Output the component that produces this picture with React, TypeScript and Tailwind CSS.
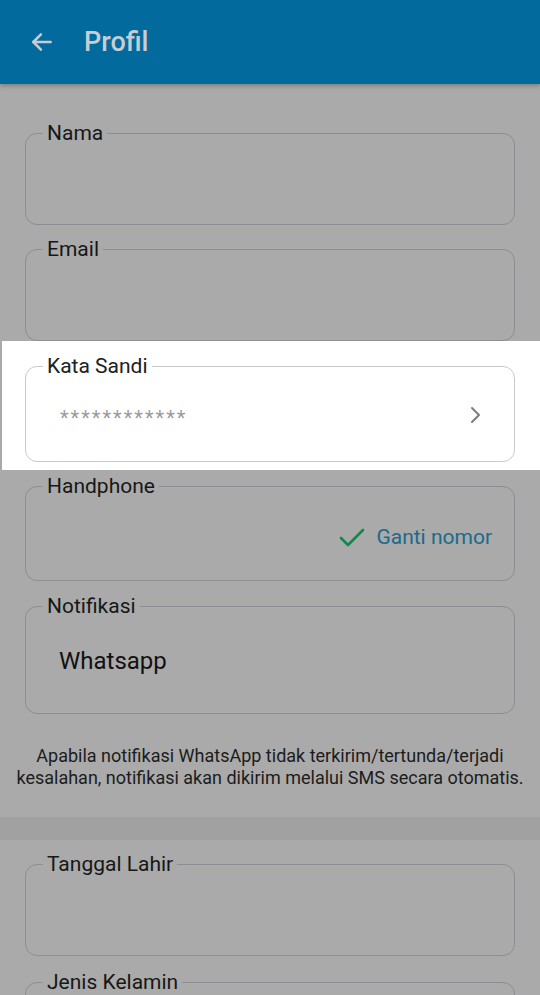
import React from 'react';

const FONT = { fontFamily: 'Roboto, "Noto Sans", Arial, sans-serif' };

function Field({
  label,
  height,
  light,
  children,
}: {
  label: string;
  height: string;
  light?: boolean;
  children?: React.ReactNode;
}) {
  return (
    <fieldset
      className={`rounded-[12px] border-[1.5px] ${light ? 'border-[#c9c9cd]' : 'border-[#8d8d92]'}`}
    >
      <legend className={`ml-[17px] px-[4px] text-[21px] leading-[24px] ${light ? 'text-[#202020]' : 'text-[#171717]'}`}>
        {label}
      </legend>
      <div className={`${height} flex items-center pl-[34px] pr-[22px] pb-[10px]`}>{children}</div>
    </fieldset>
  );
}

export default function App() {
  return (
    <div className="h-[995px] w-[540px] overflow-hidden bg-[#aaaaaa]" style={FONT}>
      <header className="relative z-10 flex h-[84px] items-center bg-[#036a9d] shadow-[0_2px_4px_rgba(0,0,0,0.25)]">
        <svg className="ml-[29px]" width="26" height="26" viewBox="0 0 24 24" fill="none" stroke="#c7cdd1" strokeWidth="2.3" strokeLinecap="round" strokeLinejoin="round">
          <path d="M20 12H4" />
          <path d="M11 5l-7 7 7 7" />
        </svg>
        <h1 className="ml-[29px] text-[27px] font-medium text-[#c7cdd1]">Profil</h1>
      </header>

      <div className="flex flex-col">
        <div className="px-[25px] pt-[37px]">
          <Field label="Nama" height="h-[79px]" />
        </div>
        <div className="px-[25px] pt-[12px]">
          <Field label="Email" height="h-[79px]" />
        </div>

        <div className="ml-[2px] bg-white pl-[23px] pr-[25px] pt-[13px] pb-[8px]">
          <Field label="Kata Sandi" height="h-[83px]" light>
            <span className="flex-1 pt-[6px] text-[20px] tracking-[2px] text-[#9c9c9c]">************</span>
            <svg className="mr-[10px]" width="14" height="18" viewBox="0 0 14 18" fill="none" stroke="#7d7d7d" strokeWidth="2" strokeLinecap="round" strokeLinejoin="round">
              <path d="M4 2l7 7-7 7" />
            </svg>
          </Field>
        </div>

        <div className="px-[25px] pt-[4px]">
          <Field label="Handphone" height="h-[82px]">
            <div className="flex flex-1 items-center justify-end gap-[10px] pt-[8px]">
              <svg width="28" height="22" viewBox="0 0 28 22" fill="none" stroke="#0f8a4a" strokeWidth="2.6" strokeLinecap="round" strokeLinejoin="round">
                <path d="M3 11l7 7L25 3" />
              </svg>
              <span className="text-[21px] text-[#1a6a8c]">Ganti nomor</span>
            </div>
          </Field>
        </div>

        <div className="px-[25px] pt-[13px]">
          <Field label="Notifikasi" height="h-[95px]">
            <span className="ml-[-1px] text-[24px] text-[#111111]">Whatsapp</span>
          </Field>
        </div>

        <p className="mt-[31px] text-center text-[18px] leading-[22px] text-[#1c1c1c]">
          Apabila notifikasi WhatsApp tidak terkirim/tertunda/terjadi
          <br />
          kesalahan, notifikasi akan dikirim melalui SMS secara otomatis.
        </p>

        <div className="mt-[28px] h-[23px] bg-[#a1a1a1]" />

        <div className="px-[25px] pt-[12px]">
          <Field label="Tanggal Lahir" height="h-[79px]" />
        </div>
        <div className="px-[25px] pt-[14px]">
          <Field label="Jenis Kelamin" height="h-[78px]" />
        </div>
      </div>
    </div>
  );
}
